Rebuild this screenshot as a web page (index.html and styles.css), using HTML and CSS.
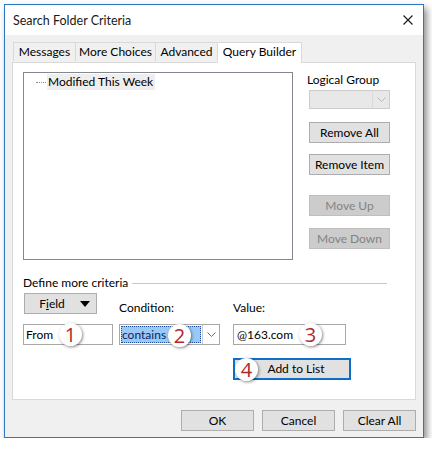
FILE: index.html
```html
<!DOCTYPE html>
<html lang="en">
<head>
<meta charset="UTF-8">
<meta name="viewport" content="width=device-width, initial-scale=1.0">
<title>Search Folder Criteria</title>
<link rel="stylesheet" href="styles.css">
</head>
<body>

<div class="dialog">
  <div class="titlebar">
    <span class="title">Search Folder Criteria</span>
    <svg class="close" width="10" height="10" viewBox="0 0 10 10">
      <path d="M0.5 0.5 L9.5 9.5 M9.5 0.5 L0.5 9.5" stroke="#1a1a1a" stroke-width="1.1" fill="none"/>
    </svg>
  </div>

  <div class="client">
    <div class="tabs">
      <div class="tab tab-messages">Messages</div>
      <div class="tab tab-more">More Choices</div>
      <div class="tab tab-advanced">Advanced</div>
      <div class="tab tab-query active">Query Builder</div>
    </div>

    <div class="panel">
      <div class="top-row">
        <div class="tree">
          <div class="node">
            <span class="dots"></span>
            <span class="node-label">Modified This Week</span>
          </div>
        </div>

        <div class="side">
          <div class="side-label">Logical Group</div>
          <div class="combo combo-disabled">
            <span class="combo-text"></span>
            <span class="combo-arrow">
              <svg width="9" height="5" viewBox="0 0 9 5"><path d="M0.5 0.5 L4.5 4.5 L8.5 0.5" stroke="#b9b9b9" fill="none"/></svg>
            </span>
          </div>
          <button class="btn btn-remove-all">Remove All</button>
          <button class="btn btn-remove-item">Remove Item</button>
          <button class="btn btn-move-up" disabled>Move Up</button>
          <button class="btn btn-move-down" disabled>Move Down</button>
        </div>
      </div>

      <div class="criteria">
        <div class="group-title">
          <span>Define more criteria</span>
          <span class="rule"></span>
        </div>

        <div class="criteria-grid">
          <button class="btn btn-field"><span>F<u>i</u>eld</span><span class="tri"></span></button>
          <div class="cell-label">Condition:</div>
          <div class="cell-label">Value:</div>

          <div class="textbox field-from">
            From
            <span class="step step-1">1</span>
          </div>
          <div class="combo combo-condition">
            <span class="combo-text selected">contains</span>
            <span class="combo-arrow">
              <svg width="9" height="5" viewBox="0 0 9 5"><path d="M0.5 0.5 L4.5 4.5 L8.5 0.5" stroke="#6d6d6d" fill="none"/></svg>
            </span>
            <span class="step step-2">2</span>
          </div>
          <div class="textbox field-value">
            @163.com
            <span class="step step-3">3</span>
          </div>

          <div class="add-cell">
            <button class="btn btn-add">Add to List</button>
            <span class="step step-4">4</span>
          </div>
        </div>
      </div>
    </div>

    <div class="footer">
      <button class="btn btn-footer">OK</button>
      <button class="btn btn-footer">Cancel</button>
      <button class="btn btn-footer">Clear All</button>
    </div>
  </div>
</div>

</body>
</html>
```

FILE: styles.css
```css
* {
  box-sizing: border-box;
}
body {
  margin: 0;
  padding: 4px 0 0 4px;
  background-color: white;
  font-family: Lato, "Noto Sans", sans-serif;
  font-size: 12px;
  color: black;
}
button {
  font-family: inherit;
  font-size: inherit;
}

/* Window frame */
.dialog {
  width: 420px;
  height: 434px;
  border: 1px solid #2b79c2;
  background-color: #f0f0f0;
  display: flex;
  flex-direction: column;
  box-shadow: 3px 4px 7px rgba(0, 0, 0, 0.45);
}
.titlebar {
  height: 30px;
  background-color: white;
  display: flex;
  align-items: center;
  justify-content: space-between;
  padding: 0 10px 0 8px;
  flex: none;
}
.title {
  font-size: 12.5px;
  color: #1a1a1a;
}
.client {
  flex: 1;
  display: flex;
  flex-direction: column;
  padding: 7px 7px 0 7px;
}

/* Tab strip */
.tabs {
  display: flex;
  align-items: flex-end;
  height: 20px;
  padding-left: 1px;
  position: relative;
  z-index: 1;
}
.tab {
  height: 19px;
  border: 1px solid #d9d9d9;
  border-bottom: none;
  border-right: none;
  background-color: #f0f0f0;
  text-align: center;
  line-height: 18px;
  margin-bottom: 1px;
}
.tab-messages { width: 62px; }
.tab-more { width: 80px; }
.tab-advanced { width: 63px; border-right: 1px solid #d9d9d9; }
.tab.active {
  width: 84px;
  height: 21px;
  background-color: white;
  border-right: 1px solid #d9d9d9;
  border-left: none;
  margin-bottom: -1px;
  line-height: 18px;
}

.panel {
  height: 338px;
  background-color: white;
  border: 1px solid #d9d9d9;
  display: flex;
  flex-direction: column;
  padding: 9px 0 0 10px;
}

/* Upper part: tree + side buttons */
.top-row {
  display: flex;
}
.tree {
  width: 270px;
  height: 188px;
  border: 1px solid #828790;
  background-color: white;
  padding: 1px 0 0 12px;
}
.node {
  display: flex;
  align-items: center;
  height: 16px;
}
.dots {
  width: 10px;
  border-top: 1px dotted #8a8a8a;
  margin-right: 1px;
}
.node-label {
  background-color: #eeeeee;
  padding: 0 2px 0 1px;
  line-height: 16px;
}
.side {
  margin-left: 14px;
  display: flex;
  flex-direction: column;
  align-items: flex-start;
}
.side-label {
  line-height: 16px;
}
.side .combo {
  margin: 2px 0 0 2px;
  width: 81px;
  height: 19px;
}
.side .btn {
  margin-left: 2px;
  width: 81px;
}
.btn-remove-all { margin-top: 13px; }
.btn-remove-item { margin-top: 11px; }
.btn-move-up { margin-top: 20px; }
.btn-move-down { margin-top: 12px; }

/* Buttons */
.btn {
  height: 21px;
  padding: 0;
  background-color: #e1e1e1;
  border: 1px solid #adadad;
  color: black;
  line-height: 19px;
}
.btn:disabled {
  background-color: #cccccc;
  border-color: #bfbfbf;
  color: #838383;
}

/* Combo boxes */
.combo {
  display: flex;
  border: 1px solid #a8a8a8;
  background-color: white;
  position: relative;
}
.combo-disabled {
  background-color: #e8e8e8;
  border-color: #cccccc;
}
.combo-text {
  flex: 1;
}
.combo-arrow {
  width: 17px;
  display: flex;
  align-items: center;
  justify-content: center;
  border-left: 1px solid #cccccc;
}
.combo-disabled .combo-arrow {
  border-left-color: #dadada;
}

/* Lower part: criteria */
.criteria {
  margin-top: 15px;
}
.group-title {
  display: flex;
  align-items: center;
  line-height: 16px;
  width: 364px;
}
.rule {
  flex: 1;
  border-top: 1px solid #c8c8c8;
  margin-left: 4px;
}
.criteria-grid {
  display: grid;
  grid-template-columns: 90px 101px 120px;
  grid-template-rows: 21px 21px 22px;
  column-gap: 6px;
  row-gap: 10px;
  margin-top: 2px;
}
.criteria-grid > *:nth-child(3),
.criteria-grid > .field-value,
.criteria-grid > .add-cell {
  margin-left: 7px;
}
.btn-field {
  width: 73px;
  margin-left: 1px;
  display: flex;
  align-items: center;
  justify-content: center;
  gap: 15px;
  padding-left: 8px;
}
.tri {
  width: 0;
  height: 0;
  border-left: 5px solid transparent;
  border-right: 5px solid transparent;
  border-top: 6px solid black;
}
.cell-label {
  align-self: end;
  line-height: 16px;
  margin-bottom: -2px;
}
.textbox {
  border: 1px solid #a8a8a8;
  background-color: white;
  padding-left: 2px;
  line-height: 19px;
  position: relative;
}
.field-value {
  padding-left: 3px;
}
.combo-condition .combo-text {
  margin: 1px;
  background-color: #99c9f7;
  outline: 1px dotted #1d4f9e;
  outline-offset: -1px;
  color: #10245a;
  line-height: 17px;
  padding-left: 1px;
}
.add-cell {
  grid-column: 3;
  margin-top: 3px;
  position: relative;
  height: 22px;
}
.btn-add {
  width: 118px;
  height: 22px;
  border: 2px solid #0f6fc6;
  line-height: 18px;
  padding-left: 8px;
}

/* Numbered callouts */
.step {
  position: absolute;
  width: 23px;
  height: 23px;
  border-radius: 50%;
  background-color: white;
  box-shadow: 1px 1px 3px rgba(0, 0, 0, 0.45);
  color: #b3262a;
  font-family: "Open Sans", "Noto Sans", sans-serif;
  font-size: 20px;
  line-height: 23px;
  text-align: center;
}
.step-1 { left: 35px; top: -2px; }
.step-2 { left: 48px; top: -1px; }
.step-3 { left: 65px; top: -2px; }
.step-4 { left: 2px; top: 0; }

/* Dialog buttons */
.footer {
  display: flex;
  justify-content: flex-end;
  gap: 8px;
  padding-top: 10px;
}
.btn-footer {
  width: 73px;
}
```
